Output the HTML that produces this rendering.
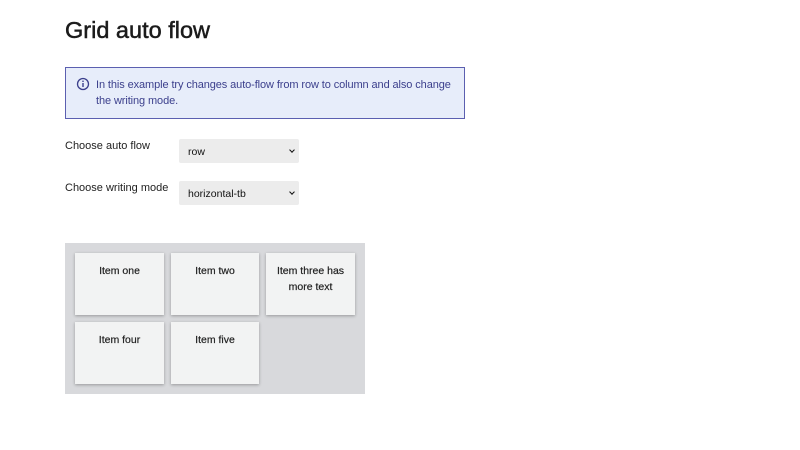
<!DOCTYPE html>
<html><head><style>
body{margin:0;background:#fff;font-family:"Liberation Sans",sans-serif;color:#1b1b1b;width:800px;height:450px;overflow:hidden;position:relative}
h1{position:absolute;left:65px;top:17px;margin:0;font-size:23.5px;font-weight:500;letter-spacing:0;-webkit-text-stroke:0.5px #1b1b1b}
.info{position:absolute;left:65px;top:67px;width:398px;height:50px;border:1px solid #5b5fb0;background:#e7edfa;color:#3b3f8c;font-size:11px;line-height:16px;letter-spacing:-0.1px}
.info .t{position:absolute;left:30px;top:9px;width:360px}
.info svg{position:absolute;left:10px;top:9px}
.lbl{position:absolute;left:65px;font-size:11px;color:#222}
.sel{position:absolute;left:179px;width:120px;height:24px;background:#ececec;border-radius:2px;font-size:10.5px;color:#111;box-sizing:border-box;padding:7px 0 0 9px}
.sel:after{content:"";position:absolute;right:5px;top:9px;width:3px;height:3px;border-right:1.5px solid #111;border-bottom:1.5px solid #111;transform:rotate(45deg)}
.grid{position:absolute;left:65px;top:243px;width:300px;height:151px;background:#d8d9dc}
.it{position:absolute;background:#f2f3f3;box-shadow:0 1px 3px rgba(0,0,0,.3);text-align:center;font-size:10.5px;line-height:16px;padding-top:10px;box-sizing:border-box;color:#222;-webkit-text-stroke:0.2px #222}
</style></head><body>
<h1>Grid auto flow</h1>
<div class="info"><svg width="14" height="14" viewBox="0 0 14 14"><circle cx="7" cy="7" r="5.5" fill="none" stroke="#3b3f8c" stroke-width="1.3"/><rect x="6.3" y="6" width="1.4" height="4" fill="#3b3f8c"/><rect x="6.3" y="3.6" width="1.4" height="1.4" fill="#3b3f8c"/></svg><div class="t">In this example try changes auto-flow from row to column and also change<br>the writing mode.</div></div>
<div class="lbl" style="top:140px">Choose auto flow</div>
<div class="sel" style="top:139px">row</div>
<div class="lbl" style="top:182px">Choose writing mode</div>
<div class="sel" style="top:181px">horizontal-tb</div>
<div class="grid"></div>
<div class="it" style="left:75px;top:253px;width:89px;height:62px">Item one</div>
<div class="it" style="left:171px;top:253px;width:88px;height:62px">Item two</div>
<div class="it" style="left:266px;top:253px;width:89px;height:62px">Item three has<br>more text</div>
<div class="it" style="left:75px;top:322px;width:89px;height:62px">Item four</div>
<div class="it" style="left:171px;top:322px;width:88px;height:62px">Item five</div>
</body></html>
